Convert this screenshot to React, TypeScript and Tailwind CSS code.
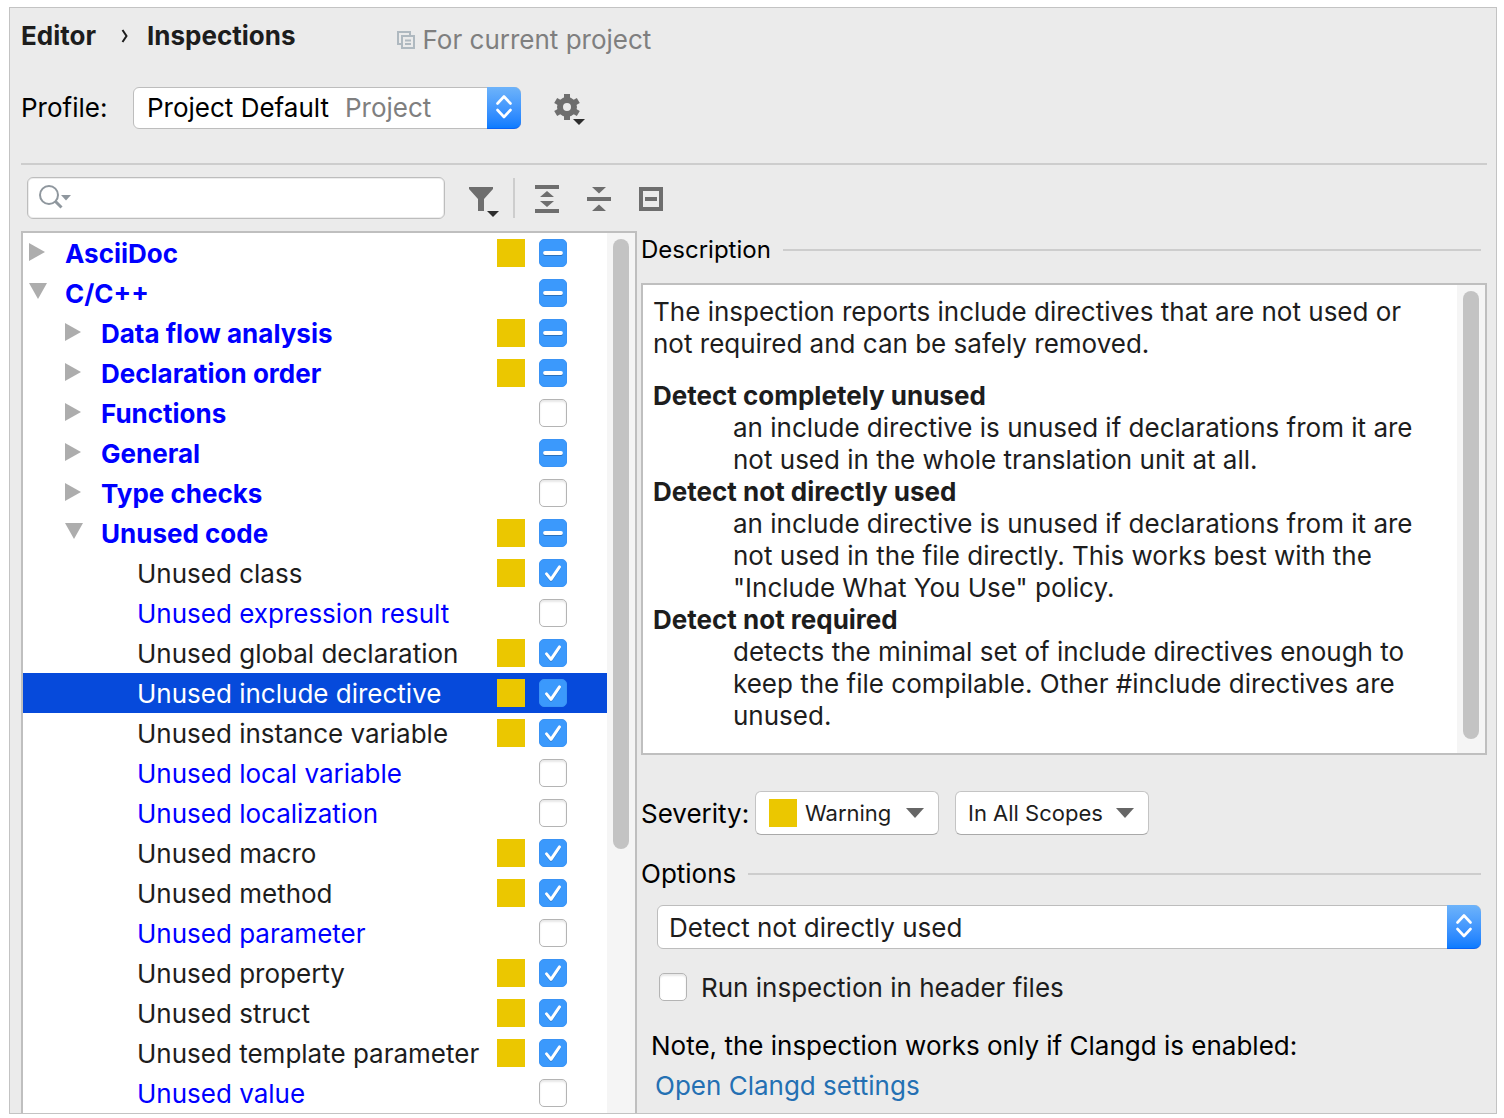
import { useState, type ReactNode } from "react";
import { clsx } from "clsx";

type CheckState = "on" | "off" | "mixed";

interface Inspection {
  name: string;
  level: 0 | 1 | 2;
  check: CheckState;
  open?: boolean;
  warning?: boolean;
  changed?: boolean;
}

const inspections: Inspection[] = [
  { name: "AsciiDoc", level: 0, check: "mixed", open: false, warning: true, changed: true },
  { name: "C/C++", level: 0, check: "mixed", open: true, changed: true },
  { name: "Data flow analysis", level: 1, check: "mixed", open: false, warning: true, changed: true },
  { name: "Declaration order", level: 1, check: "mixed", open: false, warning: true, changed: true },
  { name: "Functions", level: 1, check: "off", open: false, changed: true },
  { name: "General", level: 1, check: "mixed", open: false, changed: true },
  { name: "Type checks", level: 1, check: "off", open: false, changed: true },
  { name: "Unused code", level: 1, check: "mixed", open: true, warning: true, changed: true },
  { name: "Unused class", level: 2, check: "on", warning: true },
  { name: "Unused expression result", level: 2, check: "off", changed: true },
  { name: "Unused global declaration", level: 2, check: "on", warning: true },
  { name: "Unused include directive", level: 2, check: "on", warning: true },
  { name: "Unused instance variable", level: 2, check: "on", warning: true },
  { name: "Unused local variable", level: 2, check: "off", changed: true },
  { name: "Unused localization", level: 2, check: "off", changed: true },
  { name: "Unused macro", level: 2, check: "on", warning: true },
  { name: "Unused method", level: 2, check: "on", warning: true },
  { name: "Unused parameter", level: 2, check: "off", changed: true },
  { name: "Unused property", level: 2, check: "on", warning: true },
  { name: "Unused struct", level: 2, check: "on", warning: true },
  { name: "Unused template parameter", level: 2, check: "on", warning: true },
  { name: "Unused value", level: 2, check: "off", changed: true },
];

const indents = ["pl-1.5", "pl-[42px]", "pl-[114px]"];

function Checkbox({ id, state, onChange }: { id: string; state: CheckState; onChange: () => void }) {
  return (
    <span className="grid size-7 shrink-0">
      <input
        id={id}
        type="checkbox"
        checked={state === "on"}
        onChange={onChange}
        ref={(el) => {
          if (el) el.indeterminate = state === "mixed";
        }}
        className={clsx(
          "col-start-1 row-start-1 size-7 appearance-none rounded-[5px] border",
          state === "off"
            ? "border-[#b4b4b4] bg-white shadow-[inset_0_2px_2px_#e8e8e8]"
            : "border-[#3a93f5] bg-[#3b99fc]"
        )}
      />
      {state !== "off" && (
        <svg viewBox="0 0 28 28" className="pointer-events-none col-start-1 row-start-1 size-7" fill="none" strokeLinecap="round" strokeLinejoin="round">
          {state === "mixed" ? (
            <>
              <path d="M6 15.2H22" stroke="#2a71bd" strokeWidth="3.6" />
              <path d="M6 14H22" stroke="#fff" strokeWidth="3.8" />
            </>
          ) : (
            <>
              <path d="M7.5 15.9L12 21.4L20.5 8.9" stroke="#2f80d4" strokeWidth="3" />
              <path d="M7.5 14.9L12 20.4L20.5 7.9" stroke="#fff" strokeWidth="3" />
            </>
          )}
        </svg>
      )}
    </span>
  );
}

function Scrollbar({ thumb }: { thumb: string }) {
  return (
    <div className="w-7 shrink-0 bg-[#f5f5f5] p-1.5">
      <div className={clsx("w-4 rounded-full bg-[#c3c3c3]", thumb)} />
    </div>
  );
}

// blue stepper cap drawn at the right end of a combo box
function ComboCap() {
  return (
    <span className="pointer-events-none absolute inset-y-0 right-0 flex w-[34px] items-center justify-center rounded-r-[7px] border-b border-[#0a62f5] bg-linear-to-b from-[#6db3fa] to-[#0a7bff]">
      <svg viewBox="0 0 16 26" className="h-[26px] w-4" fill="none" stroke="#fff" strokeWidth="2.6" strokeLinecap="round" strokeLinejoin="round">
        <path d="M1.5 8.5L8 1.5L14.5 8.5" />
        <path d="M1.5 15L8 22L14.5 15" />
      </svg>
    </span>
  );
}

function DropButton({ label, className, children }: { label: string; className: string; children: string }) {
  return (
    <div className="relative flex items-center">
      <select
        aria-label={label}
        className={clsx("h-11 appearance-none rounded-md border border-[#c4c4c4] border-b-[#a9a9a9] bg-white text-[22px] text-[#1d1d1d]", className)}
      >
        <option>{children}</option>
      </select>
      <svg viewBox="0 0 18 10" className="pointer-events-none absolute right-[15px] h-2.5 w-[18px]" fill="#666">
        <path d="M0 0H18L9 10Z" />
      </svg>
    </div>
  );
}

function SectionTitle({ className, children }: { className?: string; children: ReactNode }) {
  return (
    <div className={clsx("flex h-[38px] items-center gap-3 pr-1.5", className)}>
      <h2>{children}</h2>
      <div className="h-0.5 flex-1 bg-[#cdcdcd]" />
    </div>
  );
}

function TreeRow({ item, selected, onSelect }: { item: Inspection; selected: boolean; onSelect: () => void }) {
  const [check, setCheck] = useState(item.check);
  const isGroup = item.open !== undefined;
  const id = `inspection-${item.name.replace(/\W+/g, "-").toLowerCase()}`;

  return (
    <li
      role="treeitem"
      aria-level={item.level + 1}
      aria-selected={selected}
      aria-expanded={item.open}
      onClick={onSelect}
      className={clsx(
        "flex h-10 items-center gap-3.5 pr-10",
        indents[item.level],
        selected ? "bg-[#064adb] text-white" : item.changed ? "text-[#0000ff]" : "text-[#1d1d1d]"
      )}
    >
      {isGroup && (
        <button type="button" aria-label={`Toggle ${item.name}`} className="w-[22px] pb-0.5">
          <svg viewBox="0 0 18 18" className="size-[18px]" fill="#adadad">
            {item.open ? <path d="M0 0H18L9 16Z" /> : <path d="M0 0L16 9L0 18Z" />}
          </svg>
        </button>
      )}
      <label htmlFor={id} className={clsx("flex-1 pt-0.5 whitespace-nowrap", isGroup && "font-bold")}>
        {item.name}
      </label>
      {item.warning && <span className="size-7 bg-[#ebc700]" />}
      <Checkbox id={id} state={check} onChange={() => setCheck(check === "on" ? "off" : "on")} />
    </li>
  );
}

function Toolbar() {
  return (
    <div className="flex h-[66px] items-center pl-1.5">
      <div className="relative flex items-center">
        <input
          type="text"
          aria-label="Search inspections"
          className="h-[42px] w-[418px] rounded-md border border-[#bdbdbd] bg-white pl-12 shadow-[inset_0_0_0_1px_#ededed]"
        />
        <svg viewBox="0 0 34 26" className="pointer-events-none absolute left-3 h-[26px] w-[34px]">
          <circle cx="10" cy="10" r="9" fill="none" stroke="#8f979e" strokeWidth="2" />
          <path d="M16 16L22.5 22.5" stroke="#8f979e" strokeWidth="3" />
          <path d="M22 10H32L27 15.5Z" fill="#8f979e" />
        </svg>
      </div>
      <button type="button" aria-label="Filter" className="ml-6">
        <svg viewBox="0 -8 30 38" className="h-[38px] w-[30px]">
          <path d="M0 0H24V2L15 12V24H9V12L0 2Z" fill="#6e6e6e" />
          <path d="M18 24H30L24 30Z" fill="#2d2d2d" />
        </svg>
      </button>
      <div className="ml-3.5 h-10 w-0.5 bg-[#cdcdcd]" />
      <div className="ml-5 flex gap-7">
        <button type="button" aria-label="Expand all">
          <svg viewBox="0 0 24 30" className="h-[30px] w-6" fill="#6e6e6e">
            <path d="M0 2H24V6H0ZM0 26H24V30H0ZM12 8L19 14H5ZM5 18H19L12 24Z" />
          </svg>
        </button>
        <button type="button" aria-label="Collapse all">
          <svg viewBox="0 0 24 30" className="h-[30px] w-6" fill="#6e6e6e">
            <path d="M5 4H19L12 10.5ZM0 14H24V18H0ZM12 21.5L19 28H5Z" />
          </svg>
        </button>
        <button type="button" aria-label="Reset to empty">
          <svg viewBox="0 0 24 30" className="h-[30px] w-6" fill="none" stroke="#6e6e6e" strokeWidth="4">
            <path d="M2 6H22V26H2ZM6 16H18" />
          </svg>
        </button>
      </div>
    </div>
  );
}

export default function App() {
  const [selected, setSelected] = useState("Unused include directive");
  const [headers, setHeaders] = useState(false);

  return (
    <div className="bg-white pt-[7px] pr-[7px] pb-1 pl-[9px] font-[Inter,sans-serif] text-[26px] leading-8 text-black">
      <div className="border border-[#c3c3c3] bg-[#ebebeb] pl-[11px]">
        <header className="flex h-14 items-center text-[#1d1d1d]">
          <nav aria-label="Breadcrumb" className="flex items-center font-bold">
            <span>Editor</span>
            <svg viewBox="0 0 8 14" className="mr-[18px] ml-[25px] h-3.5 w-2" fill="none" stroke="#1d1d1d" strokeWidth="2">
              <path d="M1.5 1L5.5 7L1.5 13" />
            </svg>
            <span>Inspections</span>
          </nav>
          <div className="ml-[101px] flex items-center gap-2 pt-2 text-[#7f7f7f]">
            <svg viewBox="0 0 18 18" className="size-[18px]" fill="none" stroke="#afb9c0" strokeWidth="2">
              <path d="M4 13H1V1H13V4M5 5H17V17H5ZM8 9.5H14M8 13H14" />
            </svg>
            <span>For current project</span>
          </div>
        </header>

        <div className="flex h-[88px] items-center">
          <label htmlFor="profile" className="w-28">
            Profile:
          </label>
          <div className="relative flex items-center">
            <select id="profile" className="h-[42px] w-[388px] appearance-none rounded-md border border-[#bdbdbd] bg-white pl-[13px]">
              <option>Project Default</option>
            </select>
            <span className="pointer-events-none absolute left-[212px] text-[#7f7f7f]">Project</span>
            <ComboCap />
          </div>
          <button type="button" aria-label="Profile actions" className="ml-8">
            <svg viewBox="0 0 34 34" className="size-[34px]" fill="none" stroke="#6e6e6e">
              <circle cx="14" cy="16" r="7" strokeWidth="6" />
              <path
                strokeWidth="6"
                d="M14 8V3M14 24V29M20.9 12L25.3 9.5M7.1 20L2.7 22.5M20.9 20L25.3 22.5M7.1 12L2.7 9.5"
              />
              <path d="M20 28H32L26 34Z" fill="#2d2d2d" stroke="none" />
            </svg>
          </button>
        </div>

        <div className="mt-[11px] mr-[9px] h-0.5 bg-[#cdcdcd]" />
        <Toolbar />

        <div className="flex gap-1">
          <div className="flex w-[616px] shrink-0 border-2 border-b-0 border-[#bfbfbf] bg-white">
            <ul role="tree" aria-label="Inspections" className="flex-1">
              {inspections.map((item) => (
                <TreeRow key={item.name} item={item} selected={item.name === selected} onSelect={() => setSelected(item.name)} />
              ))}
            </ul>
            <Scrollbar thumb="h-[610px]" />
          </div>

          <main className="min-w-0 flex-1 pr-[9px]">
            <SectionTitle className="text-2xl">Description</SectionTitle>
            <div className="mt-3.5 flex border-2 border-[#bfbfbf] bg-white text-[#1d1d1d]">
              <div className="flex-1 pt-[11px] pr-2.5 pb-[21px] pl-2.5">
                <p>The inspection reports include directives that are not used or not required and can be safely removed.</p>
                <dl className="mt-5">
                  <dt className="font-bold">Detect completely unused</dt>
                  <dd className="ml-20">
                    an include directive is unused if declarations from it are not used in the whole translation unit at all.
                  </dd>
                  <dt className="font-bold">Detect not directly used</dt>
                  <dd className="ml-20">
                    an include directive is unused if declarations from it are not used in the file directly. This works best with the
                    "Include What You Use" policy.
                  </dd>
                  <dt className="font-bold">Detect not required</dt>
                  <dd className="ml-20">
                    detects the minimal set of include directives enough to keep the file compilable. Other #include directives are
                    unused.
                  </dd>
                </dl>
              </div>
              <Scrollbar thumb="h-[448px]" />
            </div>

            <div className="mt-9 flex items-center">
              <span className="w-[114px] pt-0.5">Severity:</span>
              <div className="relative flex items-center">
                <DropButton label="Severity" className="w-[184px] pl-[49px]">
                  Warning
                </DropButton>
                <span className="pointer-events-none absolute left-3.5 size-7 bg-[#ebc700]" />
              </div>
              <div className="ml-4">
                <DropButton label="Scope" className="w-[194px] pl-3">
                  In All Scopes
                </DropButton>
              </div>
            </div>

            <SectionTitle className="mt-5">Options</SectionTitle>
            <div className="relative mt-3 mr-1.5 ml-4">
              <select
                aria-label="Detection mode"
                className="block h-11 w-full appearance-none rounded-md border border-[#bdbdbd] bg-white pt-0.5 pl-[11px] text-[#1d1d1d]"
              >
                <option>Detect not directly used</option>
              </select>
              <ComboCap />
            </div>
            <div className="mt-[22px] ml-[18px] flex h-8 items-center gap-3.5 text-[#1d1d1d]">
              <Checkbox id="headers" state={headers ? "on" : "off"} onChange={() => setHeaders(!headers)} />
              <label htmlFor="headers" className="pt-0.5">
                Run inspection in header files
              </label>
            </div>
            <p className="mt-[27px] ml-2.5">Note, the inspection works only if Clangd is enabled:</p>
            <a href="#clangd" className="mt-2 ml-3.5 block text-[#2470b3]">
              Open Clangd settings
            </a>
          </main>
        </div>
      </div>
    </div>
  );
}
